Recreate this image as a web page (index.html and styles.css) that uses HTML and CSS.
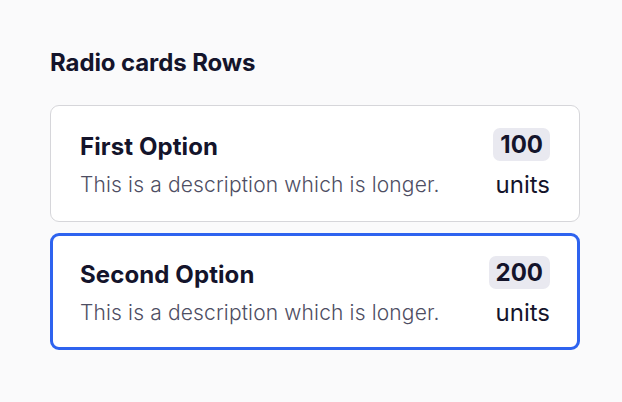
FILE: index.html
```html
<!DOCTYPE html>
<html>
<head>
<meta charset="utf-8">
<link rel="stylesheet" href="styles.css">
</head>
<body>
<main class="wrap">
  <h2 class="heading">Radio cards Rows</h2>
  <div class="cards">
    <label class="card">
      <div class="card-main">
        <div class="card-title">First Option</div>
        <div class="card-desc">This is a description which is longer.</div>
      </div>
      <div class="card-side">
        <span class="badge">100</span>
        <span class="unit">units</span>
      </div>
    </label>
    <label class="card card-selected">
      <div class="card-main">
        <div class="card-title">Second Option</div>
        <div class="card-desc">This is a description which is longer.</div>
      </div>
      <div class="card-side">
        <span class="badge">200</span>
        <span class="unit">units</span>
      </div>
    </label>
  </div>
</main>
</body>
</html>
```

FILE: styles.css
```css
html, body {
  margin: 0;
  padding: 0;
  background: #fafafb;
}
body {
  font-family: Inter, "Noto Sans", sans-serif;
  color: #14142b;
}
.wrap {
  padding: 48px 42px 0 50px;
}
.heading {
  margin: 0;
  font-size: 24px;
  line-height: 30px;
  font-weight: 700;
  color: #14142b;
  letter-spacing: -0.1px;
}
.cards {
  margin-top: 27px;
  display: flex;
  flex-direction: column;
  gap: 11px;
}
.card {
  display: flex;
  justify-content: space-between;
  align-items: flex-start;
  background: #fff;
  border: 1px solid #d6d6da;
  border-radius: 9px;
  height: 117px;
  box-sizing: border-box;
  padding: 22px 29px 0 29px;
}
.card-selected {
  border: 3px solid #2e63ef;
  padding: 20px 27px 0 27px;
}
.card-main {
  display: flex;
  flex-direction: column;
  padding-top: 4px;
}
.card-title {
  font-size: 24px;
  line-height: 30px;
  font-weight: 700;
  letter-spacing: 0.1px;
}
.card-desc {
  font-size: 21px;
  line-height: 28px;
  font-weight: 300;
  color: #4e4e63;
  margin-top: 9px;
  letter-spacing: 0.15px;
}
.card-side {
  display: flex;
  flex-direction: column;
  align-items: flex-end;
}
.badge {
  background: #e9e9f0;
  border-radius: 7px;
  font-size: 24px;
  font-weight: 700;
  line-height: 33px;
  padding: 0 7px;
}
.unit {
  font-size: 24px;
  line-height: 28px;
  margin-top: 10px;
}
```
